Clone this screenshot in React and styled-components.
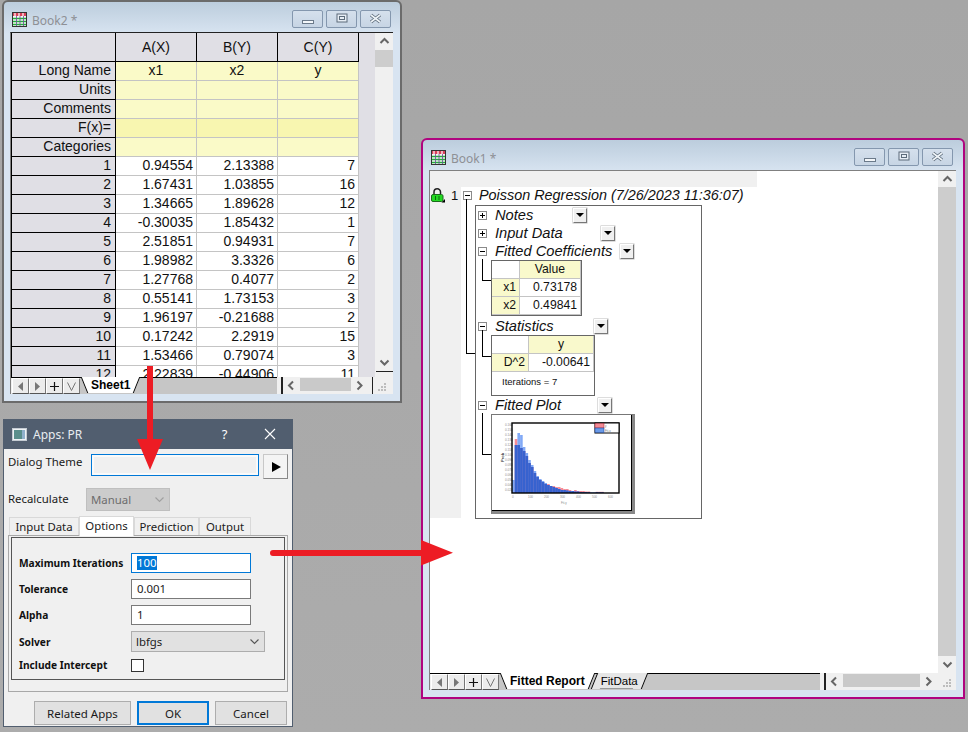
import React from "react";
import styled, { createGlobalStyle, css } from "styled-components";

const GlobalStyle = createGlobalStyle`
  html, body {
    margin: 0;
    padding: 0;
    background: #a8a8a8;
  }
  * {
    box-sizing: border-box;
  }
`;

const SHEET_FONT = `"Liberation Sans", Arial, sans-serif`;
const UI_FONT = `"Noto Sans", "Open Sans", sans-serif`;

const Desktop = styled.div`
  position: relative;
  width: 968px;
  height: 732px;
  overflow: hidden;
  background: linear-gradient(180deg, #a6a6a6, #acacac);
`;

/* ---------- mdi windows ---------- */
const MdiWindow = styled.section`
  position: absolute;
  left: ${(p) => p.$x}px;
  top: ${(p) => p.$y}px;
  width: ${(p) => p.$w}px;
  height: ${(p) => p.$h}px;
  display: flex;
  flex-direction: column;
  padding: 0 7px 7px 6px;
  border: 2px solid ${(p) => p.$frame};
  border-radius: 6px 6px 0 0;
  background: linear-gradient(180deg, #bccddd 0, #d8e4f1 32px);
`;

const TitleBar = styled.header`
  flex: none;
  height: 30px;
  display: flex;
  align-items: center;
  gap: 5px;
  padding: 4px ${(p) => p.$right}px 0 2px;
  font: 12px ${UI_FONT};
  color: #8e9095;
`;

const TitleText = styled.span`
  padding-top: 2px;
  white-space: nowrap;
`;

const WinButtons = styled.div`
  margin-left: auto;
  display: flex;
  gap: 3px;
`;

const WinButton = styled.button`
  width: 31px;
  height: 18px;
  padding: 0;
  display: flex;
  align-items: center;
  justify-content: center;
  border: 1px solid #8497ae;
  border-radius: 2px;
  background: linear-gradient(180deg, #d5e0ec, #c7d5e4);
`;

const Client = styled.div`
  flex: 1;
  min-height: 0;
  display: flex;
  flex-direction: column;
  border-top: 1px solid ${(p) => p.$edge};
  border-left: 1px solid #808080;
  background: #fff;
`;

const ClientMain = styled.div`
  flex: 1;
  min-height: 0;
  display: flex;
`;

const ScrollColumn = styled.div`
  flex: none;
  width: 18px;
  display: flex;
  flex-direction: column;
  align-items: stretch;
  background: #f0f0f0;
`;

const ScrollCap = styled.div`
  flex: none;
  height: ${(p) => p.$h}px;
  display: flex;
  align-items: center;
  justify-content: center;
`;

const ScrollTrack = styled.div`
  flex: 1;
  min-height: 0;
`;

const ScrollThumb = styled.div`
  background: #cdcdcd;
  height: ${(p) => (p.$h ? `${p.$h}px` : "100%")};
`;

/* ---------- sheet tab bar ---------- */
const SheetBar = styled.div`
  flex: none;
  height: 17px;
  display: flex;
  align-items: stretch;
  background: #f0f0f0;
`;

const NavButtons = styled.div`
  flex: none;
  display: flex;
  border-top: 1px solid #000;
  padding-left: 1px;
`;

const NavButton = styled.div`
  width: 17px;
  display: flex;
  align-items: center;
  justify-content: center;
  background: #ececec;
  border-top: 1px solid #fff;
  border-left: 1px solid #fff;
  border-right: 1px solid #777;
  border-bottom: 1px solid #555;
`;

const TabStrip = styled.div`
  flex: none;
  width: ${(p) => p.$w}px;
  display: flex;
  padding-left: 8px;
  gap: 10px;
  background: #c6c6c6;
  border-top: 1px solid #000;
`;

const SheetTab = styled.div`
  position: relative;
  z-index: 0;
  margin-top: -1px;
  padding: 0 3px;
  height: 16px;
  font: ${(p) => (p.$active ? "bold 12px" : "11.5px")} / 17px ${SHEET_FONT};
  color: #000;
  white-space: nowrap;
  background: ${(p) => (p.$active ? "#fff" : "#e6e6e6")};
  border-bottom: 1px solid ${(p) => (p.$active ? "#fff" : "#999")};
  &::before,
  &::after {
    content: "";
    position: absolute;
    z-index: -1;
    top: 0;
    bottom: -1px;
    width: 8px;
    background: inherit;
  }
  &::before {
    left: -4px;
    border-left: 1px solid #000;
    transform: skewX(${(p) => (p.$active ? 22 : -22)}deg);
  }
  &::after {
    right: -4px;
    border-right: 1px solid #000;
    transform: skewX(-22deg);
  }
`;

const HorizontalScroll = styled.div`
  flex: none;
  width: ${(p) => p.$w}px;
  margin-left: 4px;
  display: flex;
  align-items: stretch;
  border-left: 2px solid #222;
`;

const ScrollArrowCell = styled.div`
  flex: none;
  width: 17px;
  display: flex;
  align-items: center;
  justify-content: center;
`;

const HThumb = styled.div`
  flex: 1;
  margin: 1px 0 3px;
  background: #c9c9c9;
`;

const Grip = styled.div`
  flex: none;
  width: ${(p) => p.$w}px;
  display: flex;
  align-items: flex-end;
  justify-content: flex-end;
  padding: 0 4px 3px 0;
  ${(p) =>
    p.$ruled &&
    css`
      border-left: 1px solid #222;
      margin-left: 4px;
    `}
`;

/* ---------- worksheet ---------- */
const SheetViewport = styled.div`
  flex: 1;
  min-width: 0;
  overflow: hidden;
  background: #e0dfe5;
`;

const SheetGrid = styled.div`
  display: grid;
  grid-template-columns: 104px 81px 81px 81px;
  grid-template-rows: 29px;
  grid-auto-rows: 19px;
  width: 348px;
  font: 14px ${SHEET_FONT};
  color: #111;
  border-left: 1px solid #000;
`;

const HeadCell = styled.div`
  display: flex;
  align-items: center;
  justify-content: center;
  background: #e0dfe5;
  border-right: 1px solid #000;
  border-bottom: 1px solid #000;
`;

const RowLabel = styled.div`
  padding-right: 4px;
  text-align: right;
  line-height: 17px;
  background: #e0dfe5;
  border-right: 1px solid #000;
  border-bottom: 1px solid #000;
`;

const MetaCell = styled.div`
  text-align: center;
  line-height: 17px;
  background: ${(p) => (p.$formula ? "#f8f6b0" : "#fafac8")};
  border-right: 1px solid #c4c4c4;
  border-bottom: 1px solid #c4c4c4;
`;

const DataCell = styled.div`
  padding-right: 3px;
  text-align: right;
  line-height: 17px;
  background: #fff;
  border-right: 1px solid #c4c4c4;
  border-bottom: 1px solid #c4c4c4;
`;

const CornerRule = styled.div`
  flex: none;
  height: 6px;
  border-top: 1px solid #222;
  margin-left: 1px;
`;

/* ---------- report ---------- */
const ReportBand = styled.div`
  flex: none;
  height: 16px;
  width: 327px;
  background: #f0f0f0;
`;

const ReportArea = styled.div`
  flex: 1;
  min-width: 0;
  display: flex;
  flex-direction: column;
  background: #fff;
`;

const ReportRow = styled.div`
  display: flex;
`;

const Gutter = styled.div`
  flex: none;
  width: 31px;
  height: 331px;
  display: flex;
  align-items: flex-start;
  padding: 1px 0 0 1px;
  gap: 6px;
  background: #f0f0f0;
  font: 13px/16px ${SHEET_FONT};
  color: #111;
`;

const Tree = styled.div`
  position: relative;
`;

const Heading = styled.div`
  display: flex;
  align-items: center;
  height: 18px;
  padding-left: ${(p) => p.$indent || 0}px;
  padding-bottom: ${(p) => p.$lift || 0}px;
`;

const Toggle = styled.span`
  flex: none;
  position: relative;
  width: 9px;
  height: 9px;
  border: 1px solid #8a8a8a;
  background: #fff;
  &::before {
    content: "";
    position: absolute;
    left: 1px;
    top: 3px;
    width: 5px;
    height: 1px;
    background: #000;
  }
  ${(p) =>
    p.$plus &&
    css`
      &::after {
        content: "";
        position: absolute;
        left: 3px;
        top: 1px;
        width: 1px;
        height: 5px;
        background: #000;
      }
    `}
`;

const NodeTitle = styled.span`
  margin-left: ${(p) => p.$gap}px;
  font: italic ${(p) => p.$size}px ${SHEET_FONT};
  color: #111;
  white-space: nowrap;
`;

const DropButton = styled.span`
  flex: none;
  width: 14px;
  height: 15px;
  margin-left: ${(p) => p.$gap}px;
  display: flex;
  align-items: center;
  justify-content: center;
  background: #f0f0f0;
  border-top: 1px solid #fff;
  border-left: 1px solid #fff;
  border-right: 1px solid #777;
  border-bottom: 1px solid #777;
  box-shadow: 0 0 0 0.5px #bbb;
  &::before {
    content: "";
    border-left: 4px solid transparent;
    border-right: 4px solid transparent;
    border-top: 4px solid #000;
  }
`;

const OuterBox = styled.div`
  width: 227px;
  height: 314px;
  margin-left: 14px;
  padding: 0 0 0 2px;
  border: 1px solid #666;
`;

const NodeBody = styled.div`
  position: relative;
  padding-left: 13px;
  height: ${(p) => p.$h}px;
`;

const Connector = styled.span`
  position: absolute;
  left: ${(p) => p.$x}px;
  top: ${(p) => p.$y}px;
  width: ${(p) => p.$w}px;
  height: ${(p) => p.$h}px;
  border-left: 1px solid #000;
  border-bottom: 1px solid #000;
`;

const ResultTable = styled.div`
  display: grid;
  grid-template-columns: ${(p) => p.$cols};
  grid-template-rows: ${(p) => p.$rows};
  width: ${(p) => p.$w}px;
  border: 1px solid #666;
  font: 12.2px ${SHEET_FONT};
  color: #111;
  background: #fff;
`;

const ResultCell = styled.div`
  padding: 0 3px;
  line-height: 17px;
  text-align: ${(p) => p.$align};
  background: ${(p) => (p.$tint ? "#f9f9cc" : "#fff")};
  border-right: 1px solid #c4c4c4;
  border-bottom: 1px solid #c4c4c4;
`;

const ResultNote = styled.div`
  grid-column: 1 / -1;
  padding: 4px 0 0 10px;
  font: 9.5px ${SHEET_FONT};
`;

const GraphFrame = styled.div`
  width: 144px;
  height: 100px;
  background: #fff;
  border: 1px solid #777;
  border-right: 3px solid #888;
  border-bottom: 3px solid #888;
  box-shadow: inset -1px -1px 0 #000;
`;

/* ---------- dialog ---------- */
const Dialog = styled.section`
  position: absolute;
  left: 3px;
  top: 419px;
  width: 290px;
  height: 308px;
  display: flex;
  flex-direction: column;
  background: #f0f0f0;
  border: 1px solid #515e6f;
  border-top: 0;
  font: 11.4px ${UI_FONT};
  color: #1a1a1a;
`;

const DialogTitle = styled.header`
  flex: none;
  height: 30px;
  display: flex;
  align-items: center;
  padding: 0 0 0 8px;
  gap: 6px;
  background: #515e6f;
  color: #e8ecf0;
  font: 12px ${UI_FONT};
  white-space: nowrap;
`;

const TitleGlyph = styled.span`
  display: flex;
  align-items: center;
  justify-content: center;
  width: 45px;
  margin-left: ${(p) => (p.$push ? "auto" : "-6px")};
  color: #fff;
  font: 13px ${UI_FONT};
`;

const ThemeRow = styled.div`
  flex: none;
  height: 25px;
  margin-top: 5px;
  display: flex;
  align-items: flex-start;
  padding-left: 4px;
`;

const ThemeLabel = styled.label`
  flex: none;
  width: 83px;
  line-height: 15px;
`;

const ThemeInput = styled.div`
  flex: none;
  width: 168px;
  height: 22px;
  border: 1px solid #0078d7;
  background: #f0f0f0;
  box-shadow: inset 0 0 0 2px #fafafa;
`;

const PlayButton = styled.button`
  flex: none;
  width: 25px;
  height: 25px;
  margin-left: 4px;
  padding: 0;
  display: flex;
  align-items: center;
  justify-content: center;
  background: #f4f4f4;
  border: 1px solid #c8c8c8;
  border-right-color: #888;
  border-bottom-color: #888;
  &::before {
    content: "";
    margin-left: 2px;
    border-top: 5px solid transparent;
    border-bottom: 5px solid transparent;
    border-left: 9px solid #000;
  }
`;

const RecalcRow = styled.div`
  flex: none;
  height: 23px;
  margin-top: 9px;
  display: flex;
  align-items: center;
  padding-left: 4px;
`;

const RecalcLabel = styled.label`
  flex: none;
  width: 78px;
  margin-top: -3px;
`;

const SelectBox = styled.div`
  flex: none;
  width: ${(p) => p.$w}px;
  height: ${(p) => p.$h}px;
  display: flex;
  align-items: center;
  justify-content: space-between;
  padding: 0 4px;
  background: ${(p) => (p.$disabled ? "#cccccc" : "#e1e1e1")};
  border: 1px solid ${(p) => (p.$disabled ? "#bfbfbf" : "#adadad")};
  color: ${(p) => (p.$disabled ? "#6d6d6d" : "#222")};
`;

const TabRow = styled.div`
  flex: none;
  height: 18px;
  margin-top: 6px;
  display: flex;
  padding-left: 5px;
`;

const DialogTab = styled.div`
  height: ${(p) => (p.$active ? 20 : 18)}px;
  width: ${(p) => p.$w}px;
  margin-top: ${(p) => (p.$active ? -1 : 0)}px;
  text-align: center;
  line-height: 18px;
  position: relative;
  z-index: ${(p) => (p.$active ? 1 : 0)};
  background: ${(p) => (p.$active ? "#fff" : "#f0f0f0")};
  border: 1px solid #d9d9d9;
  border-bottom: 0;
`;

const TabPanel = styled.div`
  flex: none;
  height: 157px;
  margin: 0 4px;
  padding: 1px 2px 11px;
  border: 1px solid #a8a8a8;
`;

const OptionGroup = styled.div`
  height: 100%;
  padding: 15px 0 0 7px;
  display: grid;
  grid-template-columns: 112px 1fr;
  grid-template-rows: 20px 20px 20px 21px 14px;
  row-gap: 6px;
  align-items: center;
  border: 1px solid #555;
`;

const OptionLabel = styled.label`
  font: bold 10.2px ${UI_FONT};
  color: #111;
  white-space: nowrap;
`;

const OptionInput = styled.div`
  width: 120px;
  height: 20px;
  padding: 0 5px;
  background: #fff;
  border: 1px solid ${(p) => (p.$focus ? "#0078d7" : "#7a7a7a")};
  color: #222;
  font: 11.4px/18px ${UI_FONT};
`;

const Selected = styled.span`
  background: #0078d7;
  color: #fff;
  display: inline-block;
  height: 14px;
  line-height: 14px;
`;

const CheckBox = styled.div`
  width: 13px;
  height: 13px;
  background: #fff;
  border: 1px solid #333;
`;

const DialogFooter = styled.div`
  flex: none;
  display: flex;
  justify-content: flex-end;
  gap: 6px;
  padding: 9px 5px 0 0;
`;

const PushButton = styled.button`
  width: ${(p) => p.$w}px;
  height: 24px;
  padding: 0;
  font: 11.5px ${UI_FONT};
  color: #1a1a1a;
  background: #e1e1e1;
  border: ${(p) => (p.$primary ? "2px solid #0078d7" : "1px solid #adadad")};
`;

/* ---------- overlays ---------- */
const ArrowLayer = styled.svg`
  position: absolute;
  left: 0;
  top: 0;
  pointer-events: none;
`;

/* ---------- drawings ---------- */
const Chevron = ({ dir, color = "#666", weight = 2 }) => {
  const paths = {
    up: "M1.5 7 L5.5 3 L9.5 7",
    down: "M1.5 3.5 L5.5 7.5 L9.5 3.5",
    left: "M7 1.5 L3 5.5 L7 9.5",
    right: "M3.5 1.5 L7.5 5.5 L3.5 9.5",
  };
  return (
    <svg width="11" height="11" viewBox="0 0 11 11">
      <path d={paths[dir]} fill="none" stroke={color} strokeWidth={weight} />
    </svg>
  );
};

const SheetIcon = () => (
  <svg width="15" height="15" viewBox="0 0 15 15" style={{ flex: "none" }}>
    <rect x="0.5" y="0.5" width="14" height="14" fill="#f6f6f6" stroke="#333" />
    <rect x="1" y="1" width="13" height="3" fill="#d8405a" />
    <path d="M3 1v3M7 1v3M11 1v3" stroke="#fff" strokeWidth="1.2" />
    <path d="M1 6.5h13M1 9.5h13M1 12.5h13" stroke="#22b03a" strokeWidth="1.4" />
    <path d="M4.5 4v10M8 4v10M11.5 4v10" stroke="#6a4a9a" strokeWidth="0.8" />
  </svg>
);

const LockIcon = () => (
  <svg width="14" height="15" viewBox="0 0 14 15" style={{ flex: "none" }}>
    <path d="M3 7V4a3 3 0 0 1 6.5 0V7" fill="none" stroke="#222" strokeWidth="1.5" />
    <rect x="0.5" y="6.5" width="11.5" height="7" rx="1.5" fill="#22d822" stroke="#1a6a1a" />
    <path d="M4.5 8v4M8 8v4" stroke="#0a6a0a" />
    <path d="M14 11v3.5h-3.5z" fill="#000" />
  </svg>
);

const GripDots = () => (
  <svg width="9" height="9" viewBox="0 0 9 9">
    <path d="M7 1h2v2H7zM4 4h2v2H4zM7 4h2v2H7zM1 7h2v2H1zM4 7h2v2H4zM7 7h2v2H7z" fill="#bdbdbd" />
  </svg>
);

const NavGlyph = ({ kind }) => {
  if (kind === "prev") return <svg width="7" height="9"><path d="M6 0v9L1 4.5z" fill="#777" /></svg>;
  if (kind === "next") return <svg width="7" height="9"><path d="M1 0v9l5-4.5z" fill="#777" /></svg>;
  if (kind === "add") return <svg width="9" height="9"><path d="M4.5 0v9M0 4.5h9" stroke="#111" strokeWidth="1.2" /></svg>;
  return <svg width="9" height="9"><path d="M0.5 0.5L4.5 8.5L8.5 0.5" fill="none" stroke="#777" /></svg>;
};

const WinGlyph = ({ kind }) => {
  if (kind === "min") {
    return (
      <svg width="12" height="16">
        <rect x="0.5" y="9.5" width="11" height="3" fill="#f4f7fa" stroke="#6b7a8a" />
      </svg>
    );
  }
  if (kind === "max") {
    return (
      <svg width="12" height="12">
        <rect x="1" y="1" width="10" height="8" fill="#e6edf4" stroke="#5c6b7a" />
        <rect x="3.5" y="3.5" width="5" height="3" fill="#e6edf4" stroke="#5c6b7a" />
      </svg>
    );
  }
  return (
    <svg width="13" height="12">
      <path d="M2 2l9 7M11 2l-9 7" stroke="#5c6b7a" strokeWidth="3.4" />
      <path d="M2 2l9 7M11 2l-9 7" stroke="#eef3f7" strokeWidth="1.6" />
    </svg>
  );
};

const AppsIcon = () => (
  <svg width="15" height="13" viewBox="0 0 15 13" style={{ flex: "none" }}>
    <rect x="0.5" y="0.5" width="14" height="12" fill="#eef2f5" stroke="#c5ccd3" />
    <rect x="2" y="2" width="8" height="9" fill="#5a8f8c" />
    <rect x="10" y="2" width="3" height="9" fill="#8fb0cc" />
  </svg>
);

const CloseMark = () => (
  <svg width="12" height="12" viewBox="0 0 12 12">
    <path d="M1 1l10 10M11 1L1 11" stroke="#fff" strokeWidth="1.1" />
  </svg>
);

const BLUE = [13, 48, 60, 58, 46, 40, 33, 28, 22, 17, 14, 12, 10, 8, 7, 6, 5, 4, 3, 3, 2.5, 2, 2, 1.5, 1.5, 1, 1, 1, 0.8, 0.8, 0.8, 0.8, 0.6, 0.6];
const RED = [0, 54, 48, 45, 42, 37, 30, 26, 20, 16, 13, 11, 9, 9, 7, 7, 6, 6, 5, 4, 4, 3, 2, 3, 2, 2, 2, 1.5, 1.5, 0, 0, 1.2, 1.2, 1.2];
const Y_TICKS = [0.16, 0.15, 0.14, 0.13, 0.12, 0.11, 0.1, 0.09, 0.08, 0.07, 0.06, 0.05, 0.04, 0.02];

const PlotChart = () => (
  <svg width="140" height="96" viewBox="0 0 140 96" style={{ display: "block" }}>
    <g fontFamily="Liberation Sans" fontSize="3" fill="#8a8a8a">
      {Y_TICKS.map((t, i) => (
        <text key={t} x="13" y={11 + i * 5}>{t.toFixed(3)}</text>
      ))}
      {[0, 100, 200, 300, 400, 500, 600].map((t, i) => (
        <text key={t} x={20 + i * 16} y="83">{t}</text>
      ))}
      <text x="69" y="89">Fit-y</text>
    </g>
    <text x="-47" y="12" fontFamily="Liberation Sans" fontSize="4" fontWeight="bold" fill="#333" transform="rotate(-90)">Prob</text>
    <g>
      {RED.map((h, i) => (
        <rect key={i} x={20 + i * 2.7} y={78 - h} width="2.6" height={h} fill="#ee3044" fillOpacity="0.55" />
      ))}
      {BLUE.map((h, i) => (
        <rect key={i} x={20 + i * 2.7} y={78 - h} width="2.6" height={h} fill="#1a62ee" fillOpacity="0.55" />
      ))}
      {BLUE.map((h, i) => {
        const overlap = Math.min(h, RED[i]);
        return <rect key={i} x={20 + i * 2.7} y={78 - overlap} width="2.6" height={overlap} fill="#2a5fd0" fillOpacity="0.85" />;
      })}
    </g>
    <rect x="20" y="8" width="107" height="70" fill="none" stroke="#000" strokeWidth="1.4" />
    <rect x="103" y="8" width="24" height="10" fill="#fff" stroke="#000" />
    <rect x="103" y="8.5" width="9" height="4.5" fill="#f58a94" stroke="#a02030" strokeWidth="0.5" />
    <rect x="103" y="13" width="9" height="4.5" fill="#6a9ae8" stroke="#103a90" strokeWidth="0.5" />
    <g fontFamily="Liberation Sans" fontSize="3" fill="#777">
      <text x="113" y="12">y</text>
      <text x="113" y="16.5">Fit-y</text>
    </g>
  </svg>
);

const META = ["Long Name", "Units", "Comments", "F(x)=", "Categories"];
const ROWS = [
  ["0.94554", "2.13388", "7"],
  ["1.67431", "1.03855", "16"],
  ["1.34665", "1.89628", "12"],
  ["-0.30035", "1.85432", "1"],
  ["2.51851", "0.94931", "7"],
  ["1.98982", "3.3326", "6"],
  ["1.27768", "0.4077", "2"],
  ["0.55141", "1.73153", "3"],
  ["1.96197", "-0.21688", "2"],
  ["0.17242", "2.2919", "15"],
  ["1.53466", "0.79074", "3"],
  ["2.22839", "-0.44906", "11"],
];

const WindowControls = () => (
  <WinButtons>
    <WinButton><WinGlyph kind="min" /></WinButton>
    <WinButton><WinGlyph kind="max" /></WinButton>
    <WinButton><WinGlyph kind="close" /></WinButton>
  </WinButtons>
);

const SheetNav = () => (
  <NavButtons>
    <NavButton><NavGlyph kind="prev" /></NavButton>
    <NavButton><NavGlyph kind="next" /></NavButton>
    <NavButton><NavGlyph kind="add" /></NavButton>
    <NavButton><NavGlyph kind="menu" /></NavButton>
  </NavButtons>
);

function Book2() {
  return (
    <MdiWindow $x={2} $y={0} $w={400} $h={403} $frame="#6b6b6b">
      <TitleBar $right={2}>
        <SheetIcon />
        <TitleText>Book2 *</TitleText>
        <WindowControls />
      </TitleBar>
      <Client $edge="#222">
        <ClientMain>
          <SheetViewport>
            <SheetGrid>
              <HeadCell />
              <HeadCell>A(X)</HeadCell>
              <HeadCell>B(Y)</HeadCell>
              <HeadCell>C(Y)</HeadCell>
              {META.map((label, i) => (
                <React.Fragment key={label}>
                  <RowLabel>{label}</RowLabel>
                  {["x1", "x2", "y"].map((v) => (
                    <MetaCell key={v} $formula={label === "F(x)="}>{i === 0 ? v : ""}</MetaCell>
                  ))}
                </React.Fragment>
              ))}
              {ROWS.map((row, i) => (
                <React.Fragment key={i}>
                  <RowLabel>{i + 1}</RowLabel>
                  {row.map((v, j) => (
                    <DataCell key={j}>{v}</DataCell>
                  ))}
                </React.Fragment>
              ))}
            </SheetGrid>
          </SheetViewport>
          <ScrollColumn>
            <ScrollCap $h={17}><Chevron dir="up" /></ScrollCap>
            <ScrollThumb $h={17} />
            <ScrollTrack />
            <ScrollCap $h={17}><Chevron dir="down" /></ScrollCap>
            <CornerRule />
          </ScrollColumn>
        </ClientMain>
        <SheetBar>
          <SheetNav />
          <TabStrip $w={197}>
            <SheetTab $active>Sheet1</SheetTab>
          </TabStrip>
          <HorizontalScroll $w={87}>
            <ScrollArrowCell><Chevron dir="left" /></ScrollArrowCell>
            <HThumb />
            <ScrollArrowCell><Chevron dir="right" /></ScrollArrowCell>
          </HorizontalScroll>
          <Grip $w={18} $ruled><GripDots /></Grip>
        </SheetBar>
      </Client>
    </MdiWindow>
  );
}

function Book1() {
  return (
    <MdiWindow $x={421} $y={138} $w={544} $h={561} $frame="#b0047f">
      <TitleBar $right={3}>
        <SheetIcon />
        <TitleText>Book1 *</TitleText>
        <WindowControls />
      </TitleBar>
      <Client $edge="#808080">
        <ClientMain>
          <ReportArea>
            <ReportBand />
            <ReportRow>
              <Gutter>
                <LockIcon />
                1
              </Gutter>
              <Tree>
                <Heading $indent={2} $lift={2}>
                  <Toggle />
                  <NodeTitle $size={14.4} $gap={7}>Poisson Regression (7/26/2023 11:36:07)</NodeTitle>
                </Heading>
                <Connector $x={5} $y={12} $w={9} $h={155} />
                <OuterBox>
                  <Heading>
                    <Toggle $plus />
                    <NodeTitle $size={14.67} $gap={8}>Notes</NodeTitle>
                    <DropButton $gap={40} />
                  </Heading>
                  <Heading>
                    <Toggle $plus />
                    <NodeTitle $size={14.67} $gap={8}>Input Data</NodeTitle>
                    <DropButton $gap={38} />
                  </Heading>
                  <Heading>
                    <Toggle />
                    <NodeTitle $size={14.67} $gap={8}>Fitted Coefficients</NodeTitle>
                    <DropButton $gap={8} />
                  </Heading>
                  <NodeBody $h={57}>
                    <Connector $x={4} $y={-1} $w={9} $h={22} />
                    <ResultTable $cols="28px 61px" $rows="18px 18px 18px" $w={91}>
                      <ResultCell />
                      <ResultCell $tint $align="center">Value</ResultCell>
                      <ResultCell $tint $align="right">x1</ResultCell>
                      <ResultCell $align="right">0.73178</ResultCell>
                      <ResultCell $tint $align="right">x2</ResultCell>
                      <ResultCell $align="right">0.49841</ResultCell>
                    </ResultTable>
                  </NodeBody>
                  <Heading>
                    <Toggle />
                    <NodeTitle $size={14.67} $gap={8}>Statistics</NodeTitle>
                    <DropButton $gap={40} />
                  </Heading>
                  <NodeBody $h={61}>
                    <Connector $x={4} $y={-5} $w={9} $h={27} />
                    <ResultTable $cols="37px 65px" $rows="18px 18px 23px" $w={104}>
                      <ResultCell />
                      <ResultCell $tint $align="center">y</ResultCell>
                      <ResultCell $tint $align="right">D^2</ResultCell>
                      <ResultCell $align="right">-0.00641</ResultCell>
                      <ResultNote>Iterations = 7</ResultNote>
                    </ResultTable>
                  </NodeBody>
                  <Heading>
                    <Toggle />
                    <NodeTitle $size={14.67} $gap={8}>Fitted Plot</NodeTitle>
                    <DropButton $gap={37} />
                  </Heading>
                  <NodeBody $h={100}>
                    <Connector $x={4} $y={-1} $w={9} $h={42} />
                    <GraphFrame>
                      <PlotChart />
                    </GraphFrame>
                  </NodeBody>
                </OuterBox>
              </Tree>
            </ReportRow>
          </ReportArea>
          <ScrollColumn>
            <ScrollCap $h={16}><Chevron dir="up" /></ScrollCap>
            <ScrollTrack><ScrollThumb /></ScrollTrack>
            <ScrollCap $h={17}><Chevron dir="down" /></ScrollCap>
          </ScrollColumn>
        </ClientMain>
        <SheetBar>
          <SheetNav />
          <TabStrip $w={321}>
            <SheetTab $active>Fitted Report</SheetTab>
            <SheetTab>FitData</SheetTab>
          </TabStrip>
          <HorizontalScroll $w={113}>
            <ScrollArrowCell><Chevron dir="left" /></ScrollArrowCell>
            <HThumb />
            <ScrollArrowCell><Chevron dir="right" /></ScrollArrowCell>
          </HorizontalScroll>
          <Grip $w={18}><GripDots /></Grip>
        </SheetBar>
      </Client>
    </MdiWindow>
  );
}

function AppsDialog() {
  return (
    <Dialog>
      <DialogTitle>
        <AppsIcon />
        Apps: PR
        <TitleGlyph $push>?</TitleGlyph>
        <TitleGlyph><CloseMark /></TitleGlyph>
      </DialogTitle>
      <ThemeRow>
        <ThemeLabel>Dialog Theme</ThemeLabel>
        <ThemeInput />
        <PlayButton />
      </ThemeRow>
      <RecalcRow>
        <RecalcLabel>Recalculate</RecalcLabel>
        <SelectBox $w={84} $h={23} $disabled>
          Manual
          <Chevron dir="down" color="#a0a0a0" weight={1.1} />
        </SelectBox>
      </RecalcRow>
      <TabRow>
        <DialogTab $w={70}>Input Data</DialogTab>
        <DialogTab $w={55} $active>Options</DialogTab>
        <DialogTab $w={65}>Prediction</DialogTab>
        <DialogTab $w={52}>Output</DialogTab>
      </TabRow>
      <TabPanel>
        <OptionGroup>
          <OptionLabel>Maximum Iterations</OptionLabel>
          <OptionInput $focus><Selected>100</Selected></OptionInput>
          <OptionLabel>Tolerance</OptionLabel>
          <OptionInput>0.001</OptionInput>
          <OptionLabel>Alpha</OptionLabel>
          <OptionInput>1</OptionInput>
          <OptionLabel>Solver</OptionLabel>
          <SelectBox $w={134} $h={21}>
            lbfgs
            <Chevron dir="down" color="#555" weight={1.1} />
          </SelectBox>
          <OptionLabel>Include Intercept</OptionLabel>
          <CheckBox />
        </OptionGroup>
      </TabPanel>
      <DialogFooter>
        <PushButton $w={97}>Related Apps</PushButton>
        <PushButton $w={72} $primary>OK</PushButton>
        <PushButton $w={72}>Cancel</PushButton>
      </DialogFooter>
    </Dialog>
  );
}

const Arrows = () => (
  <ArrowLayer width="968" height="732" viewBox="0 0 968 732">
    <path d="M147 366h6v73h10l-13 31-13-31h10z" fill="#ed1c24" />
    <path d="M273 550h148v-10l32 12.75-32 12.75v-9.5H273a3 3 0 0 1 0-6z" fill="#ed1c24" />
  </ArrowLayer>
);

export default function App() {
  return (
    <Desktop>
      <GlobalStyle />
      <Book2 />
      <Book1 />
      <AppsDialog />
      <Arrows />
    </Desktop>
  );
}
